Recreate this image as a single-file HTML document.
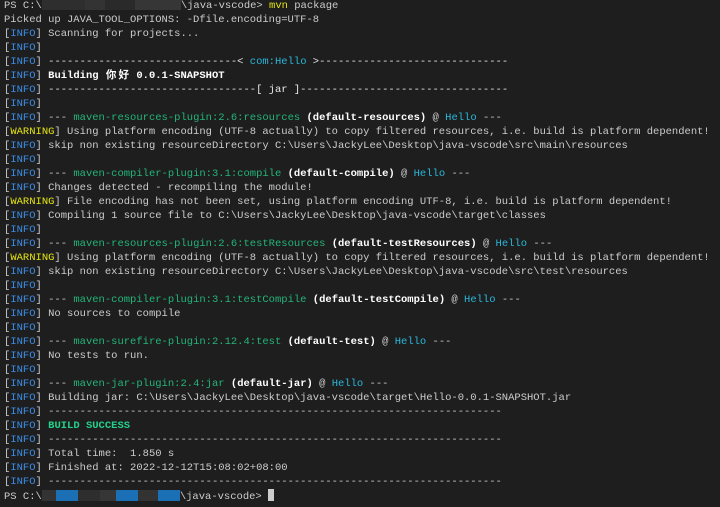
<!DOCTYPE html>
<html><head><meta charset="utf-8"><style>
html,body{margin:0;padding:0;background:#1e1e1e;width:720px;height:507px;overflow:hidden}
pre{margin:0;padding:0 0 0 4px;position:relative;top:-1px;font-family:"Liberation Mono","Noto Sans CJK SC",monospace;font-size:10.5px;line-height:14px;color:#cccccc;white-space:pre}
.i{color:#3b8eea}.w{color:#e5e510}.g{color:#23b57a}.c{color:#29b8db}.b{color:#fff;font-weight:bold}.s{color:#23d18b;font-weight:bold}.y{color:#e5e510}
.d{color:#e8e8e8}
.z{display:inline-block;width:12.6px;text-align:center}
.bl{display:inline-block;height:11px;vertical-align:-2px}
.cur{display:inline-block;width:6px;height:12px;background:#cccccc;vertical-align:-2px}
</style></head><body><pre>PS C:\<span class="bl" style="width:43px;background:#2e2e2e"></span><span class="bl" style="width:20px;background:#333"></span><span class="bl" style="width:30px;background:#2a2a2a"></span><span class="bl" style="width:46px;background:#363636"></span>\java-vscode&gt; <span class="y">mvn</span> package
Picked up JAVA_TOOL_OPTIONS: -Dfile.encoding=UTF-8
[<span class="i">INFO</span>] Scanning for projects...
[<span class="i">INFO</span>]
[<span class="i">INFO</span>] <span class="d">------------------------------&lt; </span><span class="c">com:Hello</span><span class="d"> &gt;------------------------------</span>
[<span class="i">INFO</span>] <span class="b">Building <span class="z">你</span><span class="z">好</span> 0.0.1-SNAPSHOT</span>
[<span class="i">INFO</span>] <span class="d">---------------------------------[ jar ]---------------------------------</span>
[<span class="i">INFO</span>]
[<span class="i">INFO</span>] --- <span class="g">maven-resources-plugin:2.6:resources</span> <span class="b">(default-resources)</span> @ <span class="c">Hello</span> ---
[<span class="w">WARNING</span>] Using platform encoding (UTF-8 actually) to copy filtered resources, i.e. build is platform dependent!
[<span class="i">INFO</span>] skip non existing resourceDirectory C:\Users\JackyLee\Desktop\java-vscode\src\main\resources
[<span class="i">INFO</span>]
[<span class="i">INFO</span>] --- <span class="g">maven-compiler-plugin:3.1:compile</span> <span class="b">(default-compile)</span> @ <span class="c">Hello</span> ---
[<span class="i">INFO</span>] Changes detected - recompiling the module!
[<span class="w">WARNING</span>] File encoding has not been set, using platform encoding UTF-8, i.e. build is platform dependent!
[<span class="i">INFO</span>] Compiling 1 source file to C:\Users\JackyLee\Desktop\java-vscode\target\classes
[<span class="i">INFO</span>]
[<span class="i">INFO</span>] --- <span class="g">maven-resources-plugin:2.6:testResources</span> <span class="b">(default-testResources)</span> @ <span class="c">Hello</span> ---
[<span class="w">WARNING</span>] Using platform encoding (UTF-8 actually) to copy filtered resources, i.e. build is platform dependent!
[<span class="i">INFO</span>] skip non existing resourceDirectory C:\Users\JackyLee\Desktop\java-vscode\src\test\resources
[<span class="i">INFO</span>]
[<span class="i">INFO</span>] --- <span class="g">maven-compiler-plugin:3.1:testCompile</span> <span class="b">(default-testCompile)</span> @ <span class="c">Hello</span> ---
[<span class="i">INFO</span>] No sources to compile
[<span class="i">INFO</span>]
[<span class="i">INFO</span>] --- <span class="g">maven-surefire-plugin:2.12.4:test</span> <span class="b">(default-test)</span> @ <span class="c">Hello</span> ---
[<span class="i">INFO</span>] No tests to run.
[<span class="i">INFO</span>]
[<span class="i">INFO</span>] --- <span class="g">maven-jar-plugin:2.4:jar</span> <span class="b">(default-jar)</span> @ <span class="c">Hello</span> ---
[<span class="i">INFO</span>] Building jar: C:\Users\JackyLee\Desktop\java-vscode\target\Hello-0.0.1-SNAPSHOT.jar
[<span class="i">INFO</span>] ------------------------------------------------------------------------
[<span class="i">INFO</span>] <span class="s">BUILD SUCCESS</span>
[<span class="i">INFO</span>] ------------------------------------------------------------------------
[<span class="i">INFO</span>] Total time:  1.850 s
[<span class="i">INFO</span>] Finished at: 2022-12-12T15:08:02+08:00
[<span class="i">INFO</span>] ------------------------------------------------------------------------
PS C:\<span class="bl" style="width:14px;background:#333"></span><span class="bl" style="width:22px;background:#1a6fb5"></span><span class="bl" style="width:22px;background:#2e2e2e"></span><span class="bl" style="width:16px;background:#363636"></span><span class="bl" style="width:22px;background:#1a6fb5"></span><span class="bl" style="width:20px;background:#333"></span><span class="bl" style="width:22px;background:#1a6fb5"></span>\java-vscode&gt; <span class="cur"></span></pre></body></html>
